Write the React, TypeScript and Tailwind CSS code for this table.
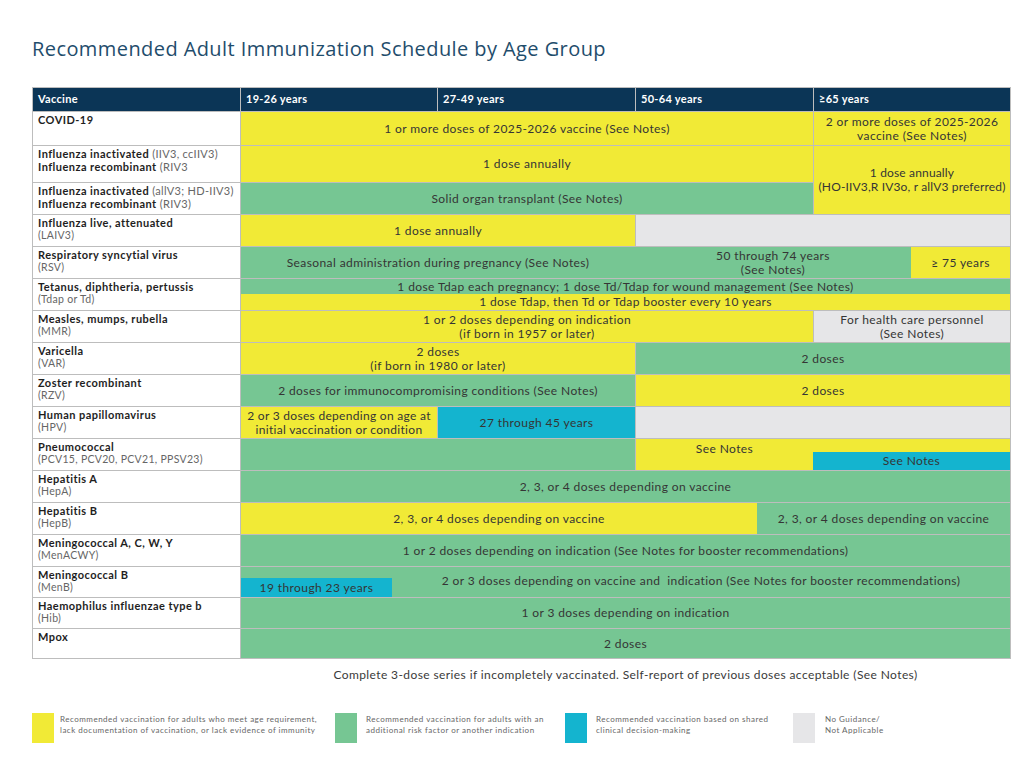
const Y = 'bg-[#f1ea36]';
const G = 'bg-[#76c693]';
const T = 'bg-[#14b4cf]';
const N = 'bg-[#e6e6e8]';

function Name({ row, name, sub }: { row: string; name: React.ReactNode; sub?: React.ReactNode }) {
  return (
    <div className={`${row} col-start-1 bg-white pl-[5px] pt-[1px] leading-[13px]`}>
      <div className="text-[11px] font-bold tracking-[0.45px] text-[#1e1e1e]">{name}</div>
      {sub && <div className="text-[10.5px] tracking-[0.3px] text-[#666]">{sub}</div>}
    </div>
  );
}

function Fill({ cls, children }: { cls: string; children?: React.ReactNode }) {
  return (
    <div className={`${cls} flex items-center justify-center text-center text-[12px] leading-[14px] tracking-[0.4px] text-[#353535]`}>
      {children}
    </div>
  );
}

function Legend({ color, w, gap, children }: { color: string; w: string; gap: string; children: React.ReactNode }) {
  return (
    <div className={`flex ${w} ${gap}`}>
      <div className={`${color} h-[30px] w-[22px] shrink-0`} />
      <div className="pt-[1px] text-[8px] leading-[11px] tracking-[0.5px] text-[#666]">{children}</div>
    </div>
  );
}

export default function App() {
  return (
    <div className="min-h-[757px] w-[1024px] bg-white pl-[32px] pt-[36px] font-['Lato',sans-serif]">
      <h1 className="font-['Open_Sans',sans-serif] text-[20px] leading-[26px] tracking-[0.42px] text-[#1f4d6c]">
        Recommended Adult Immunization Schedule by Age Group
      </h1>

      <div className="mt-[25px] grid w-[979px] grid-cols-[207px_196px_197px_177px_196px] grid-rows-[23px_33px_36px_31px_31px_31px_31px_31px_31px_31px_31px_31px_31px_31px_31px_30px_30px_29px] gap-px bg-[#bdbdbd] p-px">
        {/* header */}
        {['Vaccine', '19-26 years', '27-49 years', '50-64 years', '≥65 years'].map((h) => (
          <div key={h} className="row-start-1 flex items-center bg-[#0b3556] pl-[5px] text-[11px] font-bold tracking-[0.3px] text-white">
            {h}
          </div>
        ))}

        {/* COVID-19 */}
        <Name row="row-start-2" name="COVID-19" />
        <Fill cls={`${Y} row-start-2 col-start-2 col-span-3`}>1 or more doses of 2025-2026 vaccine (See Notes)</Fill>
        <Fill cls={`${Y} row-start-2 col-start-5`}>
          2 or more doses of 2025-2026
          <br />
          vaccine (See Notes)
        </Fill>

        {/* Influenza */}
        <Name
          row="row-start-3"
          name={
            <>
              Influenza inactivated <span className="font-normal tracking-[0.3px] text-[#666]">(IIV3, ccIIV3)</span>
              <br />
              Influenza recombinant <span className="font-normal tracking-[0.3px] text-[#666]">(RIV3</span>
            </>
          }
        />
        <Fill cls={`${Y} row-start-3 col-start-2 col-span-3`}>1 dose annually</Fill>
        <Fill cls={`${Y} row-start-3 row-span-2 col-start-5 tracking-[0.15px]!`}>
          1 dose annually
          <br />
          (HO-IIV3,R IV3o, r allV3 preferred)
        </Fill>
        <Name
          row="row-start-4"
          name={
            <>
              Influenza inactivated <span className="font-normal tracking-[0.3px] text-[#666]">(allV3; HD-IIV3)</span>
              <br />
              Influenza recombinant <span className="font-normal tracking-[0.3px] text-[#666]">(RIV3)</span>
            </>
          }
        />
        <Fill cls={`${G} row-start-4 col-start-2 col-span-3`}>Solid organ transplant (See Notes)</Fill>

        {/* Influenza live */}
        <Name row="row-start-5" name="Influenza live, attenuated" sub="(LAIV3)" />
        <Fill cls={`${Y} row-start-5 col-start-2 col-span-2`}>1 dose annually</Fill>
        <Fill cls={`${N} row-start-5 col-start-4 col-span-2`} />

        {/* RSV */}
        <Name row="row-start-6" name="Respiratory syncytial virus" sub="(RSV)" />
        <div className="row-start-6 col-start-2 col-span-4 flex">
          <Fill cls={`${G} w-[394px]`}>Seasonal administration during pregnancy (See Notes)</Fill>
          <Fill cls={`${G} w-[276px]`}>
            50 through 74 years
            <br />
            (See Notes)
          </Fill>
          <Fill cls={`${Y} flex-1`}>≥ 75 years</Fill>
        </div>

        {/* Tdap */}
        <Name row="row-start-7" name="Tetanus, diphtheria, pertussis" sub="(Tdap or Td)" />
        <div className="row-start-7 col-start-2 col-span-4 flex flex-col">
          <Fill cls={`${G} h-[15px]`}>1 dose Tdap each pregnancy; 1 dose Td/Tdap for wound management (See Notes)</Fill>
          <Fill cls={`${Y} flex-1`}>1 dose Tdap, then Td or Tdap booster every 10 years</Fill>
        </div>

        {/* MMR */}
        <Name row="row-start-8" name="Measles, mumps, rubella" sub="(MMR)" />
        <Fill cls={`${Y} row-start-8 col-start-2 col-span-3`}>
          1 or 2 doses depending on indication
          <br />
          (if born in 1957 or later)
        </Fill>
        <Fill cls={`${N} row-start-8 col-start-5 text-[#555]`}>
          For health care personnel
          <br />
          (See Notes)
        </Fill>

        {/* Varicella */}
        <Name row="row-start-9" name="Varicella" sub="(VAR)" />
        <Fill cls={`${Y} row-start-9 col-start-2 col-span-2`}>
          2 doses
          <br />
          (if born in 1980 or later)
        </Fill>
        <Fill cls={`${G} row-start-9 col-start-4 col-span-2`}>2 doses</Fill>

        {/* Zoster */}
        <Name row="row-start-10" name="Zoster recombinant" sub="(RZV)" />
        <Fill cls={`${G} row-start-10 col-start-2 col-span-2`}>2 doses for immunocompromising conditions (See Notes)</Fill>
        <Fill cls={`${Y} row-start-10 col-start-4 col-span-2`}>2 doses</Fill>

        {/* HPV */}
        <Name row="row-start-11" name="Human papillomavirus" sub="(HPV)" />
        <Fill cls={`${Y} row-start-11 col-start-2 leading-[13px] tracking-[0.3px]!`}>
          2 or 3 doses depending on age at
          <br />
          initial vaccination or condition
        </Fill>
        <Fill cls={`${T} row-start-11 col-start-3`}>27 through 45 years</Fill>
        <Fill cls={`${N} row-start-11 col-start-4 col-span-2`} />

        {/* Pneumococcal */}
        <Name row="row-start-12" name="Pneumococcal" sub="(PCV15, PCV20, PCV21, PPSV23)" />
        <Fill cls={`${G} row-start-12 col-start-2 col-span-2`} />
        <div className="row-start-12 col-start-4 col-span-2 flex">
          <div className={`${Y} w-[177px] pt-[3px] text-center text-[12px] leading-[14px] tracking-[0.4px] text-[#353535]`}>See Notes</div>
          <div className="flex flex-1 flex-col">
            <div className={`${Y} h-[13px]`} />
            <Fill cls={`${T} flex-1`}>See Notes</Fill>
          </div>
        </div>

        {/* Hepatitis A */}
        <Name row="row-start-13" name="Hepatitis A" sub="(HepA)" />
        <Fill cls={`${G} row-start-13 col-start-2 col-span-4`}>2, 3, or 4 doses depending on vaccine</Fill>

        {/* Hepatitis B */}
        <Name row="row-start-14" name="Hepatitis B" sub="(HepB)" />
        <div className="row-start-14 col-start-2 col-span-4 flex">
          <Fill cls={`${Y} w-[516px]`}>2, 3, or 4 doses depending on vaccine</Fill>
          <Fill cls={`${G} flex-1`}>2, 3, or 4 doses depending on vaccine</Fill>
        </div>

        {/* MenACWY */}
        <Name row="row-start-15" name="Meningococcal A, C, W, Y" sub="(MenACWY)" />
        <Fill cls={`${G} row-start-15 col-start-2 col-span-4`}>
          1 or 2 doses depending on indication (See Notes for booster recommendations)
        </Fill>

        {/* MenB */}
        <Name row="row-start-16" name="Meningococcal B" sub="(MenB)" />
        <div className="row-start-16 col-start-2 col-span-4 flex">
          <div className="flex w-[151px] flex-col">
            <div className={`${G} h-[11px]`} />
            <Fill cls={`${T} flex-1`}>19 through 23 years</Fill>
          </div>
          <Fill cls={`${G} flex-1 pb-[2px] whitespace-pre`}>
            {'2 or 3 doses depending on vaccine and  indication (See Notes for booster recommendations)'}
          </Fill>
        </div>

        {/* Hib */}
        <Name row="row-start-17" name="Haemophilus influenzae type b" sub="(Hib)" />
        <Fill cls={`${G} row-start-17 col-start-2 col-span-4`}>1 or 3 doses depending on indication</Fill>

        {/* Mpox */}
        <Name row="row-start-18" name="Mpox" />
        <Fill cls={`${G} row-start-18 col-start-2 col-span-4`}>2 doses</Fill>
      </div>

      <p className="mt-[8px] w-[979px] pl-[208px] text-center text-[12px] leading-[16px] tracking-[0.4px] text-[#3a3a3a]">
        Complete 3-dose series if incompletely vaccinated. Self-report of previous doses acceptable (See Notes)
      </p>

      <div className="mt-[30px] flex">
        <Legend color={Y} w="w-[303px]" gap="gap-[6px]">
          Recommended vaccination for adults who meet age requirement,
          <br />
          lack documentation of vaccination, or lack evidence of immunity
        </Legend>
        <Legend color={G} w="w-[230px]" gap="gap-[9px]">
          Recommended vaccination for adults with an
          <br />
          additional risk factor or another indication
        </Legend>
        <Legend color={T} w="w-[228px]" gap="gap-[9px]">
          Recommended vaccination based on shared
          <br />
          clinical decision-making
        </Legend>
        <Legend color={N} w="w-[200px]" gap="gap-[10px]">
          No Guidance/
          <br />
          Not Applicable
        </Legend>
      </div>
    </div>
  );
}
